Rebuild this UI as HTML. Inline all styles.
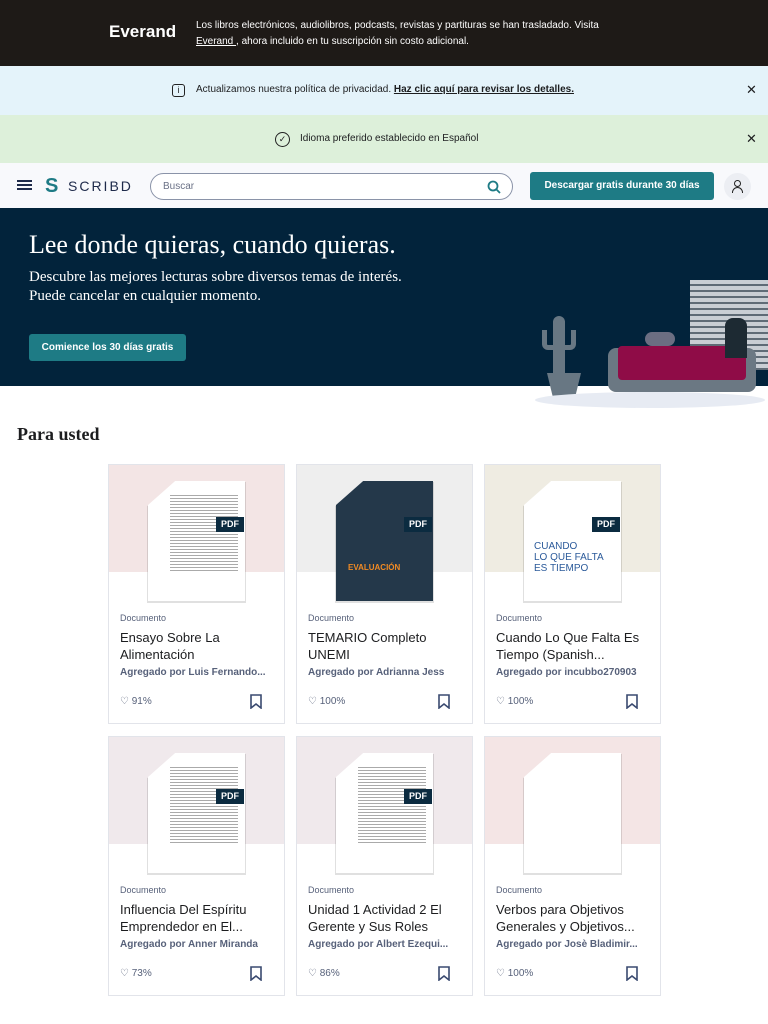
<!DOCTYPE html>
<html><head><meta charset="utf-8"><style>
*{margin:0;padding:0;box-sizing:border-box}
body{width:768px;height:1024px;overflow:hidden;background:#fff;font-family:"Liberation Sans",sans-serif;color:#1c1d1f;position:relative}
.abs{position:absolute}
.top{top:0;left:0;width:768px;height:66px;background:#1e1a17;color:#fff}
.blue{top:66px;left:0;width:768px;height:49px;background:#e4f3fa;font-size:11px}
.green{top:115px;left:0;width:768px;height:48px;background:#ddf0da;font-size:11px}
.nav{top:163px;left:0;width:768px;height:45px;background:#f8f9fc}
.hero{top:208px;left:0;width:768px;height:178px;background:#02233b;color:#fff}
.card{width:177px;height:260px;border:1px solid #e2e4ea;background:#fff}
.card .bg{position:absolute;left:0;top:0;width:100%;height:107px}
.doc{position:absolute;left:39px;top:16px;width:97px;height:120px;background:#fff;clip-path:polygon(28% 0,100% 0,100% 100%,0 100%,0 20%)}
.sh{position:absolute;left:38px;top:17px;width:99px;height:121px;background:rgba(0,0,0,.12);clip-path:polygon(28% 0,100% 0,100% 100%,0 100%,0 20%)}
.pdf{position:absolute;left:107px;top:52px;width:28px;height:15px;background:#0b2b40;color:#fff;font-size:9px;font-weight:bold;text-align:center;line-height:15px}
.lbl{position:absolute;left:11px;top:148px;font-size:9px;color:#57617a}
.ttl{position:absolute;left:11px;top:164px;font-size:13px;line-height:17px;width:160px}
.by{position:absolute;left:11px;top:202px;font-size:10px;color:#57617a;font-weight:bold;white-space:nowrap;overflow:hidden;width:155px;text-overflow:ellipsis}
.rate{position:absolute;left:11px;top:231px;font-size:10px;color:#57617a}
.bm{position:absolute;right:22px;top:229px;width:12px;height:15px}
.lines{position:absolute;left:22px;top:12px;width:68px;height:80px;background:repeating-linear-gradient(#fff 0 2px,#aaa 2px 3px)}
</style></head><body>
<div class="abs top">
<div class="abs" style="left:109px;top:22px;font-size:17px;font-weight:bold">Everand</div>
<div class="abs" style="left:196px;top:18px;font-size:10px;line-height:16px">Los libros electrónicos, audiolibros, podcasts, revistas y partituras se han trasladado. Visita<br><u>Everand </u>, ahora incluido en tu suscripción sin costo adicional.</div>
</div>
<div class="abs blue"><div class="abs" style="left:172px;top:18px;width:13px;height:13px;border:1.5px solid #222;border-radius:3px;font-size:9px;text-align:center;line-height:10px">i</div><div class="abs" style="left:196px;top:18px;font-size:10px">Actualizamos nuestra política de privacidad. <b><u>Haz clic aquí para revisar los detalles.</u></b></div><div class="abs" style="left:746px;top:16px;font-size:13px">✕</div></div>
<div class="abs green"><div class="abs" style="left:275px;top:17px;width:15px;height:15px;border:1.5px solid #222;border-radius:50%;font-size:9px;text-align:center;line-height:12px">✓</div><div class="abs" style="left:300px;top:18px;font-size:10px">Idioma preferido establecido en Español</div><div class="abs" style="left:746px;top:16px;font-size:13px">✕</div></div>
<div class="abs nav">
<div class="abs" style="left:17px;top:17px;width:15px;height:2px;background:#1e2a4a;box-shadow:0 4px #1e2a4a,0 8px #1e2a4a"></div>
<div class="abs" style="left:45px;top:12px;font-size:20px;color:#1e7b85;font-weight:bold">S</div>
<div class="abs" style="left:68px;top:15px;font-size:14px;letter-spacing:2px;color:#1e2a4a">SCRIBD</div>
<div class="abs" style="left:150px;top:10px;width:363px;height:27px;border:1px solid #8a93a8;border-radius:14px;background:#fff"><span class="abs" style="left:12px;top:7px;font-size:10px;color:#6a7186">Buscar</span><svg class="abs" style="right:11px;top:6px" width="14" height="14" viewBox="0 0 14 14"><circle cx="6" cy="6" r="4.5" fill="none" stroke="#1e7b85" stroke-width="1.8"/><path d="M9.5 9.5L13 13" stroke="#1e7b85" stroke-width="1.8"/></svg></div>
<div class="abs" style="left:530px;top:9px;width:184px;height:28px;background:#1e7b85;border-radius:3px;color:#fff;font-size:10px;font-weight:bold;text-align:center;line-height:28px">Descargar gratis durante 30 días</div>
<div class="abs" style="left:724px;top:10px;width:27px;height:27px;border-radius:50%;background:#eceef3"><span class="abs" style="left:10px;top:7px;width:7px;height:7px;border:1.5px solid #222;border-radius:50%"></span><span class="abs" style="left:8px;top:14px;width:11px;height:6px;border:1.5px solid #222;border-bottom:none;border-radius:6px 6px 0 0"></span></div>
</div>
<div class="abs hero">
<div class="abs" style="left:29px;top:22px;font-family:'Liberation Serif',serif;font-size:26px">Lee donde quieras, cuando quieras.</div>
<div class="abs" style="left:29px;top:60px;font-family:'Liberation Serif',serif;font-size:15px;line-height:19px">Descubre las mejores lecturas sobre diversos temas de interés.<br>Puede cancelar en cualquier momento.</div>
<div class="abs" style="left:29px;top:126px;width:157px;height:27px;background:#1e7b85;border-radius:3px;font-size:10px;font-weight:bold;text-align:center;line-height:27px">Comience los 30 días gratis</div>
<div class="abs" style="left:690px;top:72px;width:78px;height:90px;background:repeating-linear-gradient(#c9ced4 0 4px,#5f6b76 4px 6px)"></div>
<div class="abs" style="left:553px;top:108px;width:12px;height:60px;background:#687783;border-radius:6px 6px 0 0"></div>
<div class="abs" style="left:542px;top:122px;width:34px;height:20px;border:5px solid #687783;border-top:none;border-radius:0 0 6px 6px"></div>
<div class="abs" style="left:547px;top:165px;width:34px;height:28px;background:#687783;clip-path:polygon(0 0,100% 0,80% 100%,20% 100%)"></div>
<div class="abs" style="left:608px;top:140px;width:148px;height:44px;background:#6b7883;border-radius:8px"></div>
<div class="abs" style="left:618px;top:138px;width:128px;height:34px;background:#8f0c47;border-radius:4px"></div>
<div class="abs" style="left:725px;top:110px;width:22px;height:40px;background:#1d2a33;border-radius:8px 8px 0 0"></div>
<div class="abs" style="left:645px;top:124px;width:30px;height:14px;background:#6b6e82;border-radius:7px"></div>
</div>
<div class="abs" style="left:535px;top:392px;width:230px;height:16px;background:#e7ebf3;border-radius:50%"></div>
<div class="abs" style="left:17px;top:424px;font-family:'Liberation Serif',serif;font-size:18px;font-weight:bold">Para usted</div>

<svg width="0" height="0" style="position:absolute"><defs><symbol id="bm" viewBox="0 0 12 15"><path d="M1 1h10v13l-5-4-5 4z" fill="none" stroke="#3a4a70" stroke-width="1.6"/></symbol></defs></svg>

<div class="abs card" style="left:108px;top:464px"><div class="bg" style="background:#f3e5e5"></div><div class="sh"></div><div class="doc"><div class="lines"></div></div><div class="pdf">PDF</div><div class="lbl">Documento</div><div class="ttl">Ensayo Sobre La Alimentación</div><div class="by">Agregado por Luis Fernando...</div><div class="rate">♡ 91%</div><svg class="bm"><use href="#bm"/></svg></div>
<div class="abs card" style="left:296px;top:464px"><div class="bg" style="background:#eeeeee"></div><div class="sh"></div><div class="doc" style="background:#24384a"><div class="abs" style="left:12px;top:82px;font-size:8px;font-weight:bold;color:#f08a24">EVALUACIÓN</div></div><div class="pdf">PDF</div><div class="lbl">Documento</div><div class="ttl">TEMARIO Completo UNEMI</div><div class="by">Agregado por Adrianna Jess</div><div class="rate">♡ 100%</div><svg class="bm"><use href="#bm"/></svg></div>
<div class="abs card" style="left:484px;top:464px"><div class="bg" style="background:#efece2"></div><div class="sh"></div><div class="doc"><div class="abs" style="left:10px;top:60px;font-size:10px;color:#2b5a9a;line-height:11px">CUANDO<br>LO QUE FALTA<br>ES TIEMPO</div></div><div class="pdf">PDF</div><div class="lbl">Documento</div><div class="ttl">Cuando Lo Que Falta Es Tiempo (Spanish...</div><div class="by">Agregado por incubbo270903</div><div class="rate">♡ 100%</div><svg class="bm"><use href="#bm"/></svg></div>

<div class="abs card" style="left:108px;top:736px"><div class="bg" style="background:#f0e9ec"></div><div class="sh"></div><div class="doc"><div class="lines"></div></div><div class="pdf">PDF</div><div class="lbl">Documento</div><div class="ttl">Influencia Del Espíritu Emprendedor en El...</div><div class="by">Agregado por Anner Miranda</div><div class="rate">♡ 73%</div><svg class="bm"><use href="#bm"/></svg></div>
<div class="abs card" style="left:296px;top:736px"><div class="bg" style="background:#f0e9ec"></div><div class="sh"></div><div class="doc"><div class="lines"></div></div><div class="pdf">PDF</div><div class="lbl">Documento</div><div class="ttl">Unidad 1 Actividad 2 El Gerente y Sus Roles</div><div class="by">Agregado por Albert Ezequi...</div><div class="rate">♡ 86%</div><svg class="bm"><use href="#bm"/></svg></div>
<div class="abs card" style="left:484px;top:736px"><div class="bg" style="background:#f4e5e5"></div><div class="sh"></div><div class="doc"></div><div class="lbl">Documento</div><div class="ttl">Verbos para Objetivos Generales y Objetivos...</div><div class="by">Agregado por Josè Bladimir...</div><div class="rate">♡ 100%</div><svg class="bm"><use href="#bm"/></svg></div>
</body></html>
